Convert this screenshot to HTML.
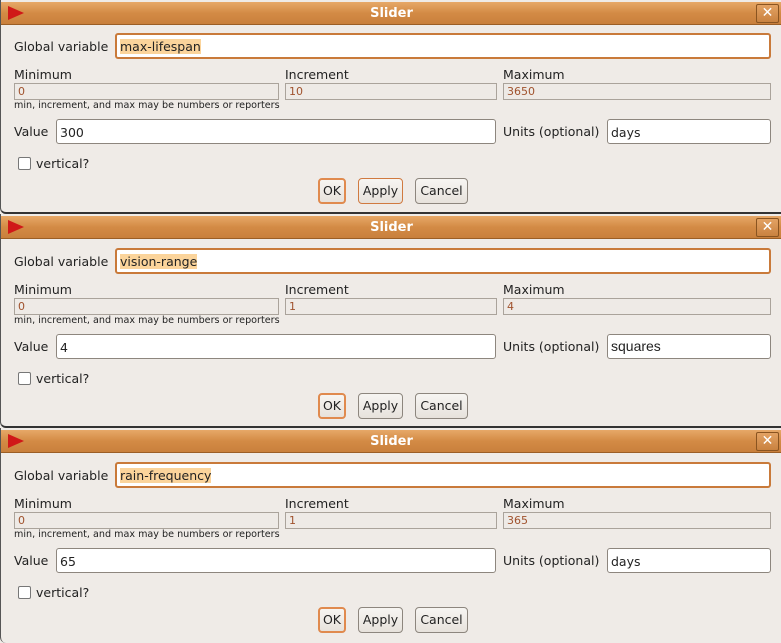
<!DOCTYPE html>
<html><head><meta charset="utf-8"><style>
*{box-sizing:border-box;margin:0;padding:0}
body{width:781px;height:643px;background:#efebe7;font-family:"DejaVu Sans","Liberation Sans",sans-serif;font-size:12.5px;color:#222;position:relative;overflow:hidden}
.d{position:absolute;left:0;width:781px;height:214px;background:#efebe7;border-left:1px solid #555;border-bottom:2px solid #333;border-bottom-left-radius:6px}
.t{position:absolute;left:0;top:2px;width:781px;height:23px;background:linear-gradient(#e7a868,#d38b45 50%,#c9803c);border-bottom:1px solid #9b5e25}
.t b{position:absolute;left:0;right:0;top:4px;text-align:center;color:#fff;font-size:13px}
.x{position:absolute;left:755px;top:2px;width:23px;height:19px;border:1px solid #8a5420;border-radius:2px;background:linear-gradient(#e3a263,#c98240);color:#fff;font-weight:bold;text-align:center;line-height:17px;font-size:14px}
.a{position:absolute;left:7px;top:4px;width:0;height:0;border-top:7px solid transparent;border-bottom:7px solid transparent;border-left:16px solid #d01818}
.l{position:absolute;white-space:nowrap}
.i{position:absolute;background:#fff;border:1px solid #8d867e;border-radius:3px;height:25px;padding:5px 3px 4px;white-space:nowrap}
.g{border:2px solid #c97a3a}
.hl{background:#fbd49b}
.f{position:absolute;height:17px;border:1px solid #aaa39b;background:#eeeae6;color:#a0522d;font-size:11px;padding:1px 3px}
.h{position:absolute;font-size:9.6px;top:100px;left:13px;white-space:nowrap}
.c{position:absolute;left:17px;top:157px;width:13px;height:13px;border:1px solid #777;border-radius:2px;background:#fff}
.b{position:absolute;top:178px;height:26px;border:1px solid #8d867e;border-radius:4px;background:linear-gradient(#f7f5f2,#e7e2dc);text-align:center;line-height:24px}
.o{border:2px solid #e08a4e;line-height:22px}
</style></head><body>

<div class="d" style="top:0">
<div class="t"><span class="a"></span><b>Slider</b><span class="x">✕</span></div>
<span class="l" style="left:13px;top:39px">Global variable</span>
<div class="i g" style="left:114px;top:33px;width:656px;height:26px;padding:4px 3px"><span class="hl">max-lifespan</span></div>
<span class="l" style="left:13px;top:67px">Minimum</span><span class="l" style="left:284px;top:67px">Increment</span><span class="l" style="left:502px;top:67px">Maximum</span>
<div class="f" style="left:13px;top:83px;width:265px">0</div><div class="f" style="left:284px;top:83px;width:212px">10</div><div class="f" style="left:502px;top:83px;width:268px">3650</div>
<span class="h">min, increment, and max may be numbers or reporters</span>
<span class="l" style="left:13px;top:124px">Value</span><div class="i" style="left:55px;top:119px;width:440px">300</div>
<span class="l" style="left:502px;top:124px">Units (optional)</span><div class="i" style="left:606px;top:119px;width:164px">days</div>
<span class="c"></span><span class="l" style="left:35px;top:156px">vertical?</span>
<div class="b o" style="left:317px;width:28px">OK</div><div class="b o" style="left:357px;width:45px;border-width:1px;border-color:#d07a40;line-height:24px">Apply</div><div class="b" style="left:414px;width:53px">Cancel</div>
</div>

<div class="d" style="top:214px">
<div class="t"><span class="a"></span><b>Slider</b><span class="x">✕</span></div>
<span class="l" style="left:13px;top:40px">Global variable</span>
<div class="i g" style="left:114px;top:34px;width:656px;height:26px;padding:4px 3px"><span class="hl">vision-range</span></div>
<span class="l" style="left:13px;top:68px">Minimum</span><span class="l" style="left:284px;top:68px">Increment</span><span class="l" style="left:502px;top:68px">Maximum</span>
<div class="f" style="left:13px;top:84px;width:265px">0</div><div class="f" style="left:284px;top:84px;width:212px">1</div><div class="f" style="left:502px;top:84px;width:268px">4</div>
<span class="h" style="top:101px">min, increment, and max may be numbers or reporters</span>
<span class="l" style="left:13px;top:125px">Value</span><div class="i" style="left:55px;top:120px;width:440px">4</div>
<span class="l" style="left:502px;top:125px">Units (optional)</span><div class="i" style="left:606px;top:120px;width:164px;font-family:'Liberation Sans',sans-serif;font-size:14px;padding-top:3px">squares</div>
<span class="c" style="top:158px"></span><span class="l" style="left:35px;top:157px">vertical?</span>
<div class="b o" style="left:317px;width:28px;top:179px">OK</div><div class="b" style="left:357px;width:45px;top:179px">Apply</div><div class="b" style="left:414px;width:53px;top:179px">Cancel</div>
</div>

<div class="d" style="top:428px;height:215px;border-bottom:none">
<div class="t"><span class="a"></span><b>Slider</b><span class="x">✕</span></div>
<span class="l" style="left:13px;top:40px">Global variable</span>
<div class="i g" style="left:114px;top:34px;width:656px;height:26px;padding:4px 3px"><span class="hl">rain-frequency</span></div>
<span class="l" style="left:13px;top:68px">Minimum</span><span class="l" style="left:284px;top:68px">Increment</span><span class="l" style="left:502px;top:68px">Maximum</span>
<div class="f" style="left:13px;top:84px;width:265px">0</div><div class="f" style="left:284px;top:84px;width:212px">1</div><div class="f" style="left:502px;top:84px;width:268px">365</div>
<span class="h" style="top:101px">min, increment, and max may be numbers or reporters</span>
<span class="l" style="left:13px;top:125px">Value</span><div class="i" style="left:55px;top:120px;width:440px">65</div>
<span class="l" style="left:502px;top:125px">Units (optional)</span><div class="i" style="left:606px;top:120px;width:164px">days</div>
<span class="c" style="top:158px"></span><span class="l" style="left:35px;top:157px">vertical?</span>
<div class="b o" style="left:317px;width:28px;top:179px">OK</div><div class="b" style="left:357px;width:45px;top:179px">Apply</div><div class="b" style="left:414px;width:53px;top:179px">Cancel</div>
</div>
</body></html>
